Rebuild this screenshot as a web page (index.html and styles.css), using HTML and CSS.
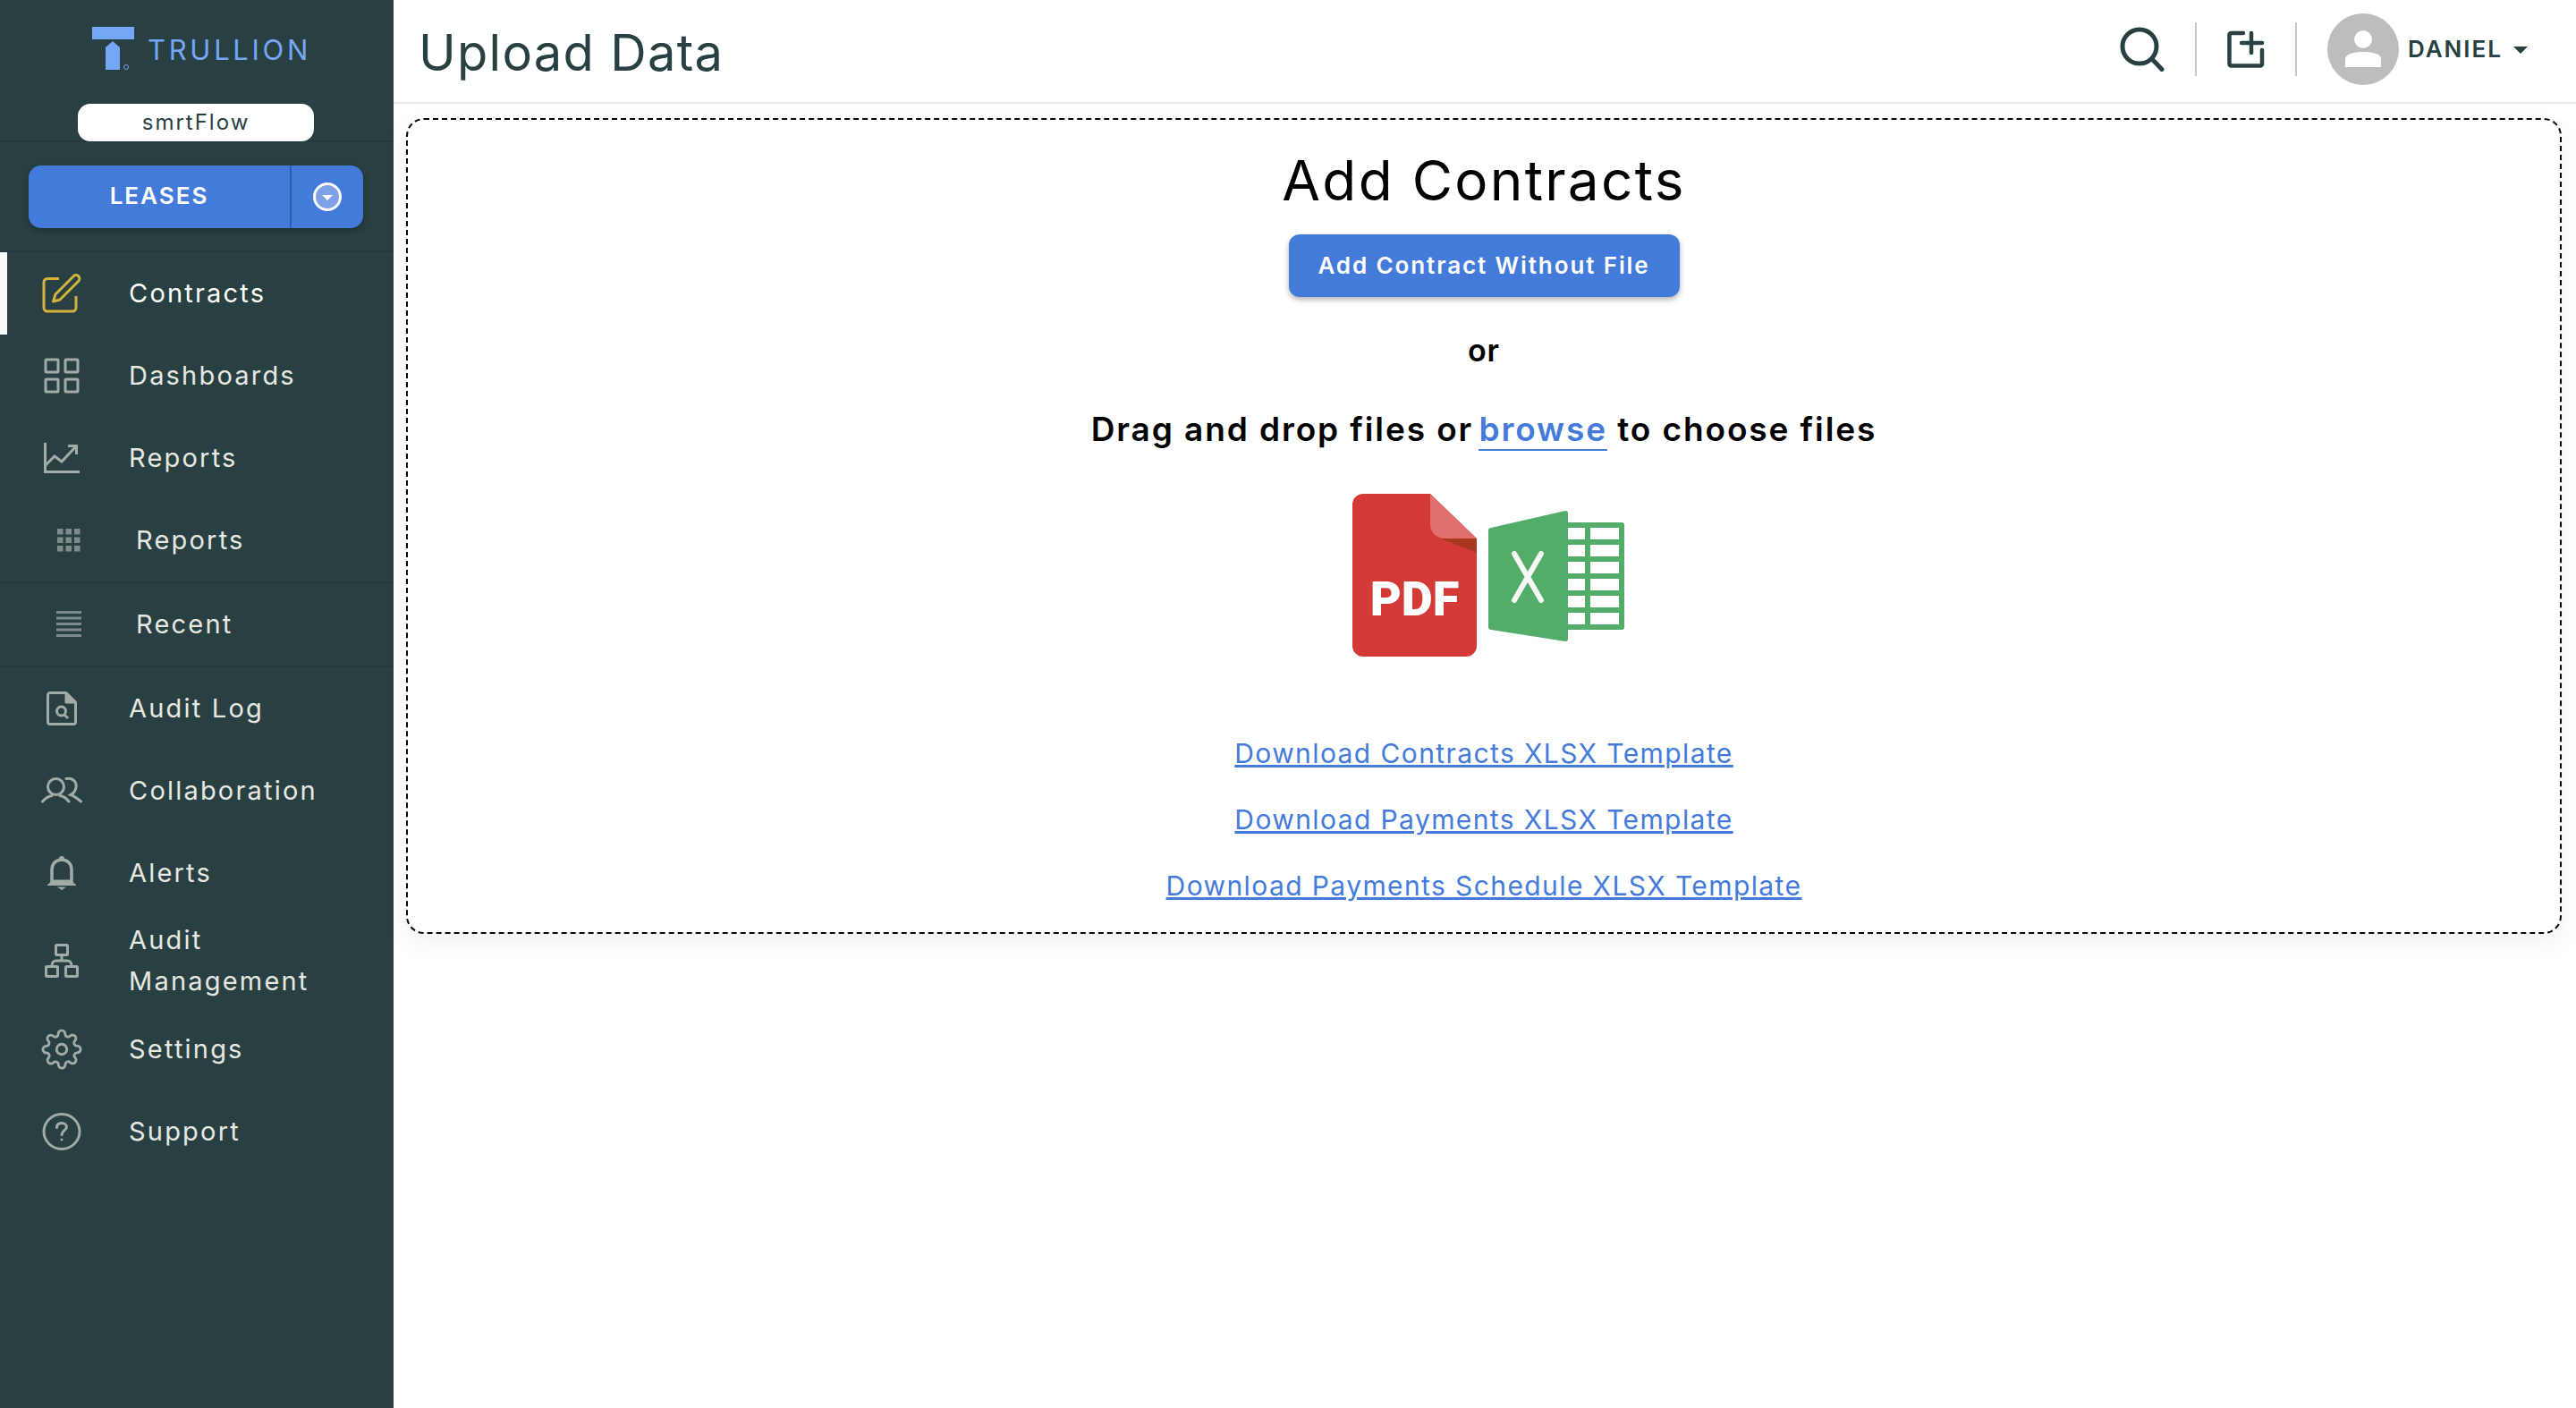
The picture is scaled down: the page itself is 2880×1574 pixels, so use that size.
FILE: index.html
```html
<!DOCTYPE html>
<html lang="en">
<head>
    <meta charset="UTF-8">
    <title>Upload Data</title>
    <link rel="stylesheet" href="styles.css">
</head>
<body>
    <aside class="sidebar">
        <div class="brand">
            <svg class="brand-mark" width="50" height="50" viewBox="0 0 50 50">
                <rect x="1" y="0" width="47" height="14" fill="#76a7f7"/>
                <path d="M16 23L24 16L32 23V48H16z" fill="#76a7f7"/>
                <circle cx="39" cy="45" r="2.5" fill="none" stroke="#76a7f7"/>
            </svg>
            <span class="brand-name">TRULLION</span>
        </div>
        <div class="pill-row"><div class="pill">smrtFlow</div></div>
        <div class="module-row">
            <div class="module-btn">
                <span class="module-name">LEASES</span>
                <span class="module-toggle">
                    <svg width="34" height="34" viewBox="0 0 34 34">
                        <circle cx="17" cy="17" r="14.5" fill="#7ea2e6" stroke="#fff" stroke-width="3"/>
                        <path d="M11 15H23L17 21z" fill="#fff"/>
                    </svg>
                </span>
            </div>
        </div>
        <nav class="nav">
            <a class="nav-item active">
                <span class="nav-icon">
                    <svg width="44" height="44" viewBox="0 0 44 44" fill="none" stroke="#d4b23f" stroke-width="3" stroke-linejoin="round">
                        <path d="M19 5.500H6a4 4 0 0 0-4 4V38a4 4 0 0 0 4 4h28a4 4 0 0 0 4-4V25"/>
                        <path d="M15 23L35 3a3.500 3.500 0 0 1 6 5L20 29L12.500 31z"/>
                    </svg>
                </span>
                Contracts
            </a>
            <a class="nav-item">
                <span class="nav-icon">
                    <svg width="40" height="40" viewBox="0 0 40 40" fill="none" stroke="#a3aba6" stroke-width="3">
                        <rect x="2" y="2" width="14" height="14" rx="1"/>
                        <rect x="24" y="2" width="14" height="14" rx="1"/>
                        <rect x="2" y="24" width="14" height="14" rx="1"/>
                        <rect x="24" y="24" width="14" height="14" rx="1"/>
                    </svg>
                </span>
                Dashboards
            </a>
            <a class="nav-item">
                <span class="nav-icon">
                    <svg width="40" height="34" viewBox="0 0 40 34" fill="none" stroke="#a3aba6" stroke-width="3">
                        <path d="M1.500 0V32.500H40"/>
                        <path d="M2 25L12 15L20 21L36 4"/>
                        <path d="M27 3.500H36.500V13"/>
                    </svg>
                </span>
                Reports
            </a>
            <a class="nav-item nav-sub">
                <span class="nav-icon">
                    <svg width="26" height="26" viewBox="0 0 26 26" fill="#7d8b8b">
                        <rect x="0" y="0" width="6.500" height="6.500"/><rect x="9.500" y="0" width="6.500" height="6.500"/><rect x="19" y="0" width="6.500" height="6.500"/>
                        <rect x="0" y="9.500" width="6.500" height="6.500"/><rect x="9.500" y="9.500" width="6.500" height="6.500"/><rect x="19" y="9.500" width="6.500" height="6.500"/>
                        <rect x="0" y="19" width="6.500" height="6.500"/><rect x="9.500" y="19" width="6.500" height="6.500"/><rect x="19" y="19" width="6.500" height="6.500"/>
                    </svg>
                </span>
                Reports
            </a>
            <a class="nav-item nav-sub nav-sub-line">
                <span class="nav-icon">
                    <svg width="28" height="29" viewBox="0 0 28 29" fill="#7d8b8b">
                        <rect y="0" width="28" height="3"/><rect y="6.500" width="28" height="3"/><rect y="13" width="28" height="3"/><rect y="19.500" width="28" height="3"/><rect y="26" width="28" height="3"/>
                    </svg>
                </span>
                Recent
            </a>
            <a class="nav-item">
                <span class="nav-icon">
                    <svg width="34" height="38" viewBox="0 0 34 38" fill="none" stroke="#a3aba6" stroke-width="3" stroke-linejoin="round">
                        <path d="M22 1.500H4a2.500 2.500 0 0 0-2.500 2.500V34a2.500 2.500 0 0 0 2.500 2.500H30a2.500 2.500 0 0 0 2.500-2.500V12z"/>
                        <path d="M22 1.500V12H32.500" fill="#a3aba6"/>
                        <circle cx="16.500" cy="22" r="5"/>
                        <path d="M20 26L24 30"/>
                    </svg>
                </span>
                Audit Log
            </a>
            <a class="nav-item">
                <span class="nav-icon">
                    <svg width="46" height="30" viewBox="0 0 46 30" fill="none" stroke="#a3aba6" stroke-width="3" stroke-linecap="round">
                        <circle cx="16.500" cy="10.500" r="9"/>
                        <path d="M1.500 27C5 23 9 21 12 20.500M21 20.500C24 21 28 23 31 27"/>
                        <path d="M28 1.500C35 0 40 5 39 11C38.500 15 36 18 33 19.500C37 21 41 24 44.500 27"/>
                    </svg>
                </span>
                Collaboration
            </a>
            <a class="nav-item">
                <span class="nav-icon">
                    <svg width="34" height="38" viewBox="0 0 34 38" fill="none" stroke="#a3aba6" stroke-width="3.500">
                        <circle cx="17" cy="3" r="3" fill="#a3aba6" stroke="none"/>
                        <path d="M6 29V15C6 8.500 11 4 17 4C23 4 28 8.500 28 15V29"/>
                        <path d="M1 32.500C3 31 5 29.500 6 27H28C29 29.500 31 31 33 32.500z" fill="#a3aba6" stroke-width="1"/>
                        <path d="M12 34.500H22L17 38z" fill="#a3aba6" stroke="none"/>
                    </svg>
                </span>
                Alerts
            </a>
            <a class="nav-item nav-tall">
                <span class="nav-icon">
                    <svg width="38" height="38" viewBox="0 0 38 38" fill="none" stroke="#a3aba6" stroke-width="3">
                        <rect x="12.500" y="1.500" width="13" height="11" rx="1"/>
                        <rect x="1.500" y="25.500" width="13" height="11" rx="1"/>
                        <rect x="23.500" y="25.500" width="13" height="11" rx="1"/>
                        <path d="M19 12.500V19M8 25.500C8 21 9 19 13 19H25C29 19 30 21 30 25.500"/>
                    </svg>
                </span>
                <span class="nav-label">Audit<br>Management</span>
            </a>
            <a class="nav-item">
                <span class="nav-icon">
                    <svg width="48" height="46" viewBox="0 0 24 24" fill="none" stroke="#a3aba6" stroke-width="1.500">
                        <circle cx="12" cy="12" r="3"/>
                        <path d="M19.400 15a1.650 1.650 0 0 0 .33 1.820l.06.06a2 2 0 0 1 0 2.830 2 2 0 0 1-2.830 0l-.06-.06a1.650 1.650 0 0 0-1.820-.33 1.650 1.650 0 0 0-1 1.510V21a2 2 0 0 1-2 2 2 2 0 0 1-2-2v-.09A1.650 1.650 0 0 0 9 19.400a1.650 1.650 0 0 0-1.820.33l-.06.06a2 2 0 0 1-2.830 0 2 2 0 0 1 0-2.830l.06-.06a1.650 1.650 0 0 0 .33-1.820 1.650 1.650 0 0 0-1.510-1H3a2 2 0 0 1-2-2 2 2 0 0 1 2-2h.09A1.650 1.650 0 0 0 4.600 9a1.650 1.650 0 0 0-.33-1.820l-.06-.06a2 2 0 0 1 0-2.830 2 2 0 0 1 2.830 0l.06.06a1.650 1.650 0 0 0 1.820.33H9a1.650 1.650 0 0 0 1-1.510V3a2 2 0 0 1 2-2 2 2 0 0 1 2 2v.09a1.650 1.650 0 0 0 1 1.510 1.650 1.650 0 0 0 1.820-.33l.06-.06a2 2 0 0 1 2.830 0 2 2 0 0 1 0 2.830l-.06.06a1.650 1.650 0 0 0-.33 1.820V9a1.650 1.650 0 0 0 1.510 1H21a2 2 0 0 1 2 2 2 2 0 0 1-2 2h-.09a1.650 1.650 0 0 0-1.510 1z"/>
                    </svg>
                </span>
                Settings
            </a>
            <a class="nav-item">
                <span class="nav-icon">
                    <svg width="44" height="42" viewBox="0 0 44 42" fill="none" stroke="#a3aba6" stroke-width="3" stroke-linecap="round">
                        <ellipse cx="22" cy="21" rx="20" ry="19.500"/>
                        <path d="M16.500 16.500C16.500 13 19 11.500 22 11.500C25 11.500 27.500 13.500 27.500 16C27.500 19.500 22 20 22 24.500"/>
                        <circle cx="22" cy="30" r="1.500" fill="#a3aba6" stroke="none"/>
                    </svg>
                </span>
                Support
            </a>
        </nav>
    </aside>

    <div class="main">
        <header class="topbar">
            <h1 class="page-title">Upload Data</h1>
            <div class="top-actions">
                <svg class="top-icon" width="50" height="50" viewBox="0 0 50 50" fill="none" stroke="#284042" stroke-width="5" stroke-linecap="round">
                    <circle cx="22" cy="22" r="19"/>
                    <path d="M36 36L47 47.500"/>
                </svg>
                <span class="top-sep"></span>
                <svg class="top-icon" width="42" height="42" viewBox="0 0 42 42" fill="none" stroke="#284042" stroke-width="4.500" stroke-linecap="round" stroke-linejoin="round">
                    <path d="M18 3H4.500a2 2 0 0 0-2 2.500V37.500a2 2 0 0 0 2 2H37a2 2 0 0 0 2-2V22"/>
                    <path d="M27 3V25M16 14H39"/>
                </svg>
                <span class="top-sep"></span>
                <div class="avatar">
                    <svg width="44" height="44" viewBox="0 0 44 44" fill="#fff">
                        <circle cx="22" cy="11" r="10"/>
                        <path d="M2 42V33C2 27 12 25 22 25C32 25 42 27 42 33V42z"/>
                    </svg>
                </div>
                <span class="user-name">DANIEL</span>
                <span class="user-caret"></span>
            </div>
        </header>

        <div class="content">
            <section class="dropzone">
                <h2 class="drop-title">Add Contracts</h2>
                <button class="add-btn">Add Contract Without File</button>
                <p class="or-text">or</p>
                <p class="drop-text">Drag and drop files or <a class="browse-link">browse</a> to choose files</p>
                <div class="file-icons">
                    <svg width="139" height="182" viewBox="0 0 139 182">
                        <path d="M12 0H87L139 50V170a12 12 0 0 1-12 12H12a12 12 0 0 1-12-12V12A12 12 0 0 1 12 0z" fill="#d33a35"/>
                        <path d="M99 50H139V66z" fill="#a9361f"/>
                        <path d="M87 0L139 50H103a16 16 0 0 1-16-16z" fill="#e06f6d"/>
                        <text class="pdf-label" x="69.500" y="136" text-anchor="middle">PDF</text>
                    </svg>
                    <svg class="excel-icon" width="152" height="146" viewBox="0 0 152 146">
                        <path d="M3 19L86 0a3 3 0 0 1 3 3V13H149a3 3 0 0 1 3 3V130a3 3 0 0 1-3 3H89V143a3 3 0 0 1-3 3L3 133a3 3 0 0 1-3-3V22a3 3 0 0 1 3-3z" fill="#52ad69"/>
                        <path d="M29 48L59 100M59 48L29 100" fill="none" stroke="#f7f7f7" stroke-width="6" stroke-linecap="round"/>
                        <g fill="#fff">
                            <rect x="89" y="19" width="19" height="13"/><rect x="114" y="19" width="32" height="13"/>
                            <rect x="89" y="38" width="19" height="13"/><rect x="114" y="38" width="32" height="13"/>
                            <rect x="89" y="57" width="19" height="13"/><rect x="114" y="57" width="32" height="13"/>
                            <rect x="89" y="76" width="19" height="13"/><rect x="114" y="76" width="32" height="13"/>
                            <rect x="89" y="95" width="19" height="13"/><rect x="114" y="95" width="32" height="13"/>
                            <rect x="89" y="114" width="19" height="13"/><rect x="114" y="114" width="32" height="13"/>
                        </g>
                    </svg>
                </div>
                <div class="templates">
                    <a class="template-link">Download Contracts XLSX Template</a>
                    <a class="template-link">Download Payments XLSX Template</a>
                    <a class="template-link">Download Payments Schedule XLSX Template</a>
                </div>
            </section>
        </div>
    </div>
</body>
</html>
```
FILE: styles.css
```css
* {
    box-sizing: border-box;
}
html, body {
    height: 100%;
}
body {
    margin: 0;
    display: flex;
    font-family: 'Inter', 'Roboto', sans-serif;
    background-color: #fff;
    overflow: hidden;
}
.sidebar {
    width: 440px;
    height: 1574px;
    flex-shrink: 0;
    background-color: #284042;
    color: #e8e8e2;
}
.brand {
    height: 116px;
    padding: 30px 0 0 102px;
    display: flex;
    align-items: flex-start;
}
.brand-mark {
    flex-shrink: 0;
}
.brand-name {
    margin: 7px 0 0 13px;
    color: #76a7f7;
    font-size: 31px;
    line-height: 38px;
    letter-spacing: 3.700px;
}
.pill-row {
    height: 43px;
    border-bottom: 2px solid #243a3c;
    padding-left: 87px;
}
.pill {
    width: 264px;
    height: 42px;
    background-color: #fff;
    border-radius: 14px;
    color: #284042;
    font-size: 24px;
    line-height: 42px;
    letter-spacing: 2px;
    text-align: center;
}
.module-row {
    height: 123px;
    padding: 26px 34px 0 32px;
    border-bottom: 2px solid #243a3c;
}
.module-btn {
    display: flex;
    height: 70px;
    border-radius: 14px;
    background-color: #447bda;
    box-shadow: 0 3px 6px rgba(0,0,0,0.25);
    color: #fff;
}
.module-name {
    width: 294px;
    border-right: 2px solid #2f5ea8;
    text-align: center;
    font-size: 26px;
    font-weight: 600;
    line-height: 68px;
    letter-spacing: 2px;
}
.module-toggle {
    flex: 1;
    display: flex;
    align-items: center;
    justify-content: center;
}
.nav-item {
    display: flex;
    align-items: center;
    height: 92px;
    padding-left: 46px;
    padding-bottom: 1px;
    font-size: 29px;
    letter-spacing: 2.200px;
}
.nav-item.active {
    border-left: 8px solid #f8f9fb;
    padding-left: 38px;
    color: #fff;
}
.nav-icon {
    width: 46px;
    height: 46px;
    flex-shrink: 0;
    margin-right: 52px;
    display: flex;
    align-items: center;
    justify-content: center;
}
.nav-sub {
    padding-left: 54px;
}
.nav-sub-line {
    height: 96px;
    border-top: 2px solid #243a3c;
    border-bottom: 2px solid #243a3c;
}
.nav-tall {
    height: 105px;
}
.nav-label {
    line-height: 46px;
}
.main {
    flex: 1;
    min-width: 0;
}
.topbar {
    height: 116px;
    border-bottom: 2px solid #e8e8e2;
    padding: 0 54px 4px 28px;
    display: flex;
    align-items: center;
    justify-content: space-between;
}
.page-title {
    margin: 8px 0 0;
    color: #284042;
    font-size: 56px;
    font-weight: 400;
    letter-spacing: 1.300px;
}
.top-actions {
    display: flex;
    align-items: center;
}
.top-sep {
    width: 2px;
    height: 60px;
    margin: 0 34px;
    background-color: #c9c9c9;
}
.avatar {
    width: 80px;
    height: 80px;
    border-radius: 50%;
    background-color: #bdbdbd;
    display: flex;
    align-items: center;
    justify-content: center;
}
.user-name {
    margin: 0 0 2px 10px;
    color: #284042;
    font-size: 26px;
    font-weight: 600;
    letter-spacing: 2px;
}
.user-caret {
    margin: 2px 0 0 12px;
    border-style: solid;
    border-width: 8px 8px 0;
    border-color: #284042 transparent transparent;
}
.content {
    padding: 16px 16px 0 14px;
}
.dropzone {
    border: 2px dashed #000;
    border-radius: 20px;
    padding: 30px 0 32px;
    display: flex;
    flex-direction: column;
    align-items: center;
    box-shadow: 0 10px 30px rgba(0,0,0,0.06);
    color: #000;
}
.drop-title {
    margin: 0;
    font-size: 62px;
    font-weight: 400;
    line-height: 76px;
    letter-spacing: 2.300px;
}
.add-btn {
    margin-top: 22px;
    padding-bottom: 3px;
    width: 437px;
    height: 70px;
    border: none;
    border-radius: 12px;
    background-color: #447bda;
    box-shadow: 0 3px 6px rgba(0,0,0,0.3);
    color: #fff;
    font-family: inherit;
    font-size: 26px;
    font-weight: 600;
    letter-spacing: 1.900px;
}
.or-text {
    margin: 40px 0 0;
    font-size: 34px;
    font-weight: 600;
    line-height: 40px;
    letter-spacing: 1px;
}
.drop-text {
    margin: 44px 0 0;
    font-size: 37px;
    font-weight: 600;
    line-height: 48px;
    letter-spacing: 1.900px;
}
.browse-link {
    margin-left: -5px;
    color: #447bda;
    border-bottom: 2px solid #447bda;
}
.file-icons {
    margin-top: 48px;
    margin-left: 9px;
    height: 182px;
    display: flex;
    align-items: center;
    gap: 13px;
}
.excel-icon {
    margin-top: 2px;
}
.pdf-label {
    font-family: 'Roboto', sans-serif;
    font-size: 54px;
    font-weight: 900;
    fill: #fff;
}
.templates {
    margin-top: 88px;
    display: flex;
    flex-direction: column;
    align-items: center;
    gap: 34px;
}
.template-link {
    color: #447bda;
    font-size: 30px;
    line-height: 40px;
    letter-spacing: 1.400px;
    text-decoration: underline;
}
```
